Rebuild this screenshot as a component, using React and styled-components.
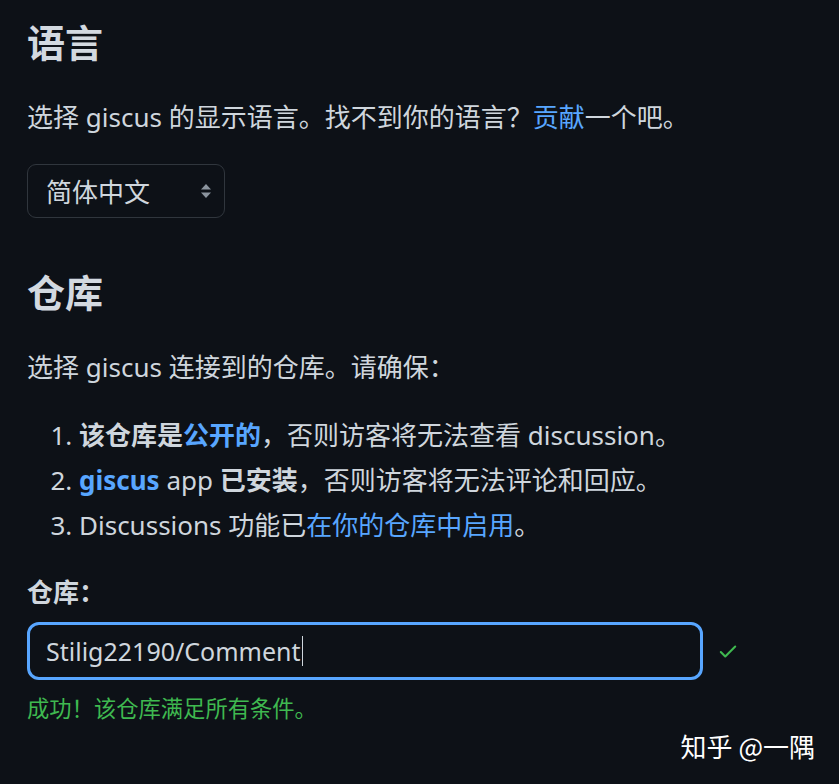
import React from "react";
import styled, { createGlobalStyle } from "styled-components";

const Global = createGlobalStyle`
  html, body { margin: 0; padding: 0; background: #0d1117; }
  body {
    font-family: "Noto Sans", "Noto Sans CJK SC", sans-serif;
    color: #cfd6dd;
    -webkit-font-smoothing: antialiased;
  }
`;

const Page = styled.div`
  position: relative;
  width: 839px;
  height: 784px;
  box-sizing: border-box;
  padding: 20px 27px 0;
  overflow: hidden;
`;

const Heading = styled.h2`
  margin: ${(p) => (p.$first ? "0" : "52px")} 0 0;
  font-size: 38px;
  line-height: 45px;
  font-weight: 700;
  color: #d3d9e0;
`;

const Para = styled.p`
  margin: 34px 0 0;
  font-size: 26px;
  line-height: 36px;
`;

const Link = styled.a`
  color: #58a6ff;
  text-decoration: none;
  font-weight: ${(p) => (p.$bold ? 700 : 400)};
`;

const Strong = styled.strong`
  font-weight: 700;
`;

const SelectBox = styled.div`
  margin-top: 29px;
  width: 198px;
  height: 54px;
  box-sizing: border-box;
  border: 1.5px solid #30363d;
  border-radius: 9px;
  display: flex;
  align-items: center;
  justify-content: space-between;
  padding: 0 12px 0 18px;
  font-size: 26px;
  color: #cfd6dd;
`;

const List = styled.ol`
  margin: 32px 0 0;
  padding-left: 52px;
  font-size: 26px;
  line-height: 36px;
`;

const Item = styled.li`
  margin-top: ${(p) => (p.$first ? "0" : "9px")};
`;

const Label = styled.div`
  margin-top: 31px;
  font-size: 26px;
  line-height: 36px;
  font-weight: 700;
`;

const InputRow = styled.div`
  margin-top: 12px;
  display: flex;
  align-items: center;
  gap: 14px;
`;

const InputBox = styled.div`
  width: 676px;
  height: 58px;
  box-sizing: border-box;
  border: 3px solid #58a6ff;
  border-radius: 12px;
  display: flex;
  align-items: center;
  padding-left: 16px;
  font-size: 25px;
  color: #cfd6dd;
`;

const Caret = styled.span`
  display: inline-block;
  width: 1px;
  height: 30px;
  background: #cfd6dd;
  margin-left: 1px;
`;

const Success = styled.div`
  margin-top: 11px;
  font-size: 22.3px;
  line-height: 36px;
  color: #3fb950;
`;

const Watermark = styled.div`
  position: absolute;
  right: 24px;
  bottom: 20px;
  font-size: 26px;
  color: #ffffff;
  font-family: "Noto Sans CJK SC", sans-serif;
  word-spacing: 0px;
`;

const Arrows = () => (
  <svg width="12" height="16" viewBox="0 0 12 16">
    <path d="M6 1 L11 6.5 H1 Z" fill="#8b949e" />
    <path d="M6 15 L11 9.5 H1 Z" fill="#8b949e" />
  </svg>
);

const Check = () => (
  <svg width="22" height="22" viewBox="0 0 16 16">
    <path
      d="M13.78 4.22a.75.75 0 0 1 0 1.06l-7.25 7.25a.75.75 0 0 1-1.06 0L2.22 9.28a.75.75 0 0 1 1.06-1.06L6 10.94l6.72-6.72a.75.75 0 0 1 1.06 0Z"
      fill="#3fb950"
    />
  </svg>
);

export default function App() {
  return (
    <>
      <Global />
      <Page>
        <Heading $first>语言</Heading>
        <Para>
          选择 giscus 的显示语言。找不到你的语言？<Link>贡献</Link>一个吧。
        </Para>
        <SelectBox>
          <span>简体中文</span>
          <Arrows />
        </SelectBox>

        <Heading>仓库</Heading>
        <Para>选择 giscus 连接到的仓库。请确保：</Para>
        <List>
          <Item $first>
            <Strong>该仓库是</Strong>
            <Link $bold>公开的</Link>，否则访客将无法查看 discussion。
          </Item>
          <Item>
            <Link $bold>giscus</Link> app <Strong>已安装</Strong>，否则访客将无法评论和回应。
          </Item>
          <Item>
            Discussions 功能已<Link>在你的仓库中启用</Link>。
          </Item>
        </List>

        <Label>仓库：</Label>
        <InputRow>
          <InputBox>
            Stilig22190/Comment
            <Caret />
          </InputBox>
          <Check />
        </InputRow>
        <Success>成功！该仓库满足所有条件。</Success>

        <Watermark>知乎 @一隅</Watermark>
      </Page>
    </>
  );
}
